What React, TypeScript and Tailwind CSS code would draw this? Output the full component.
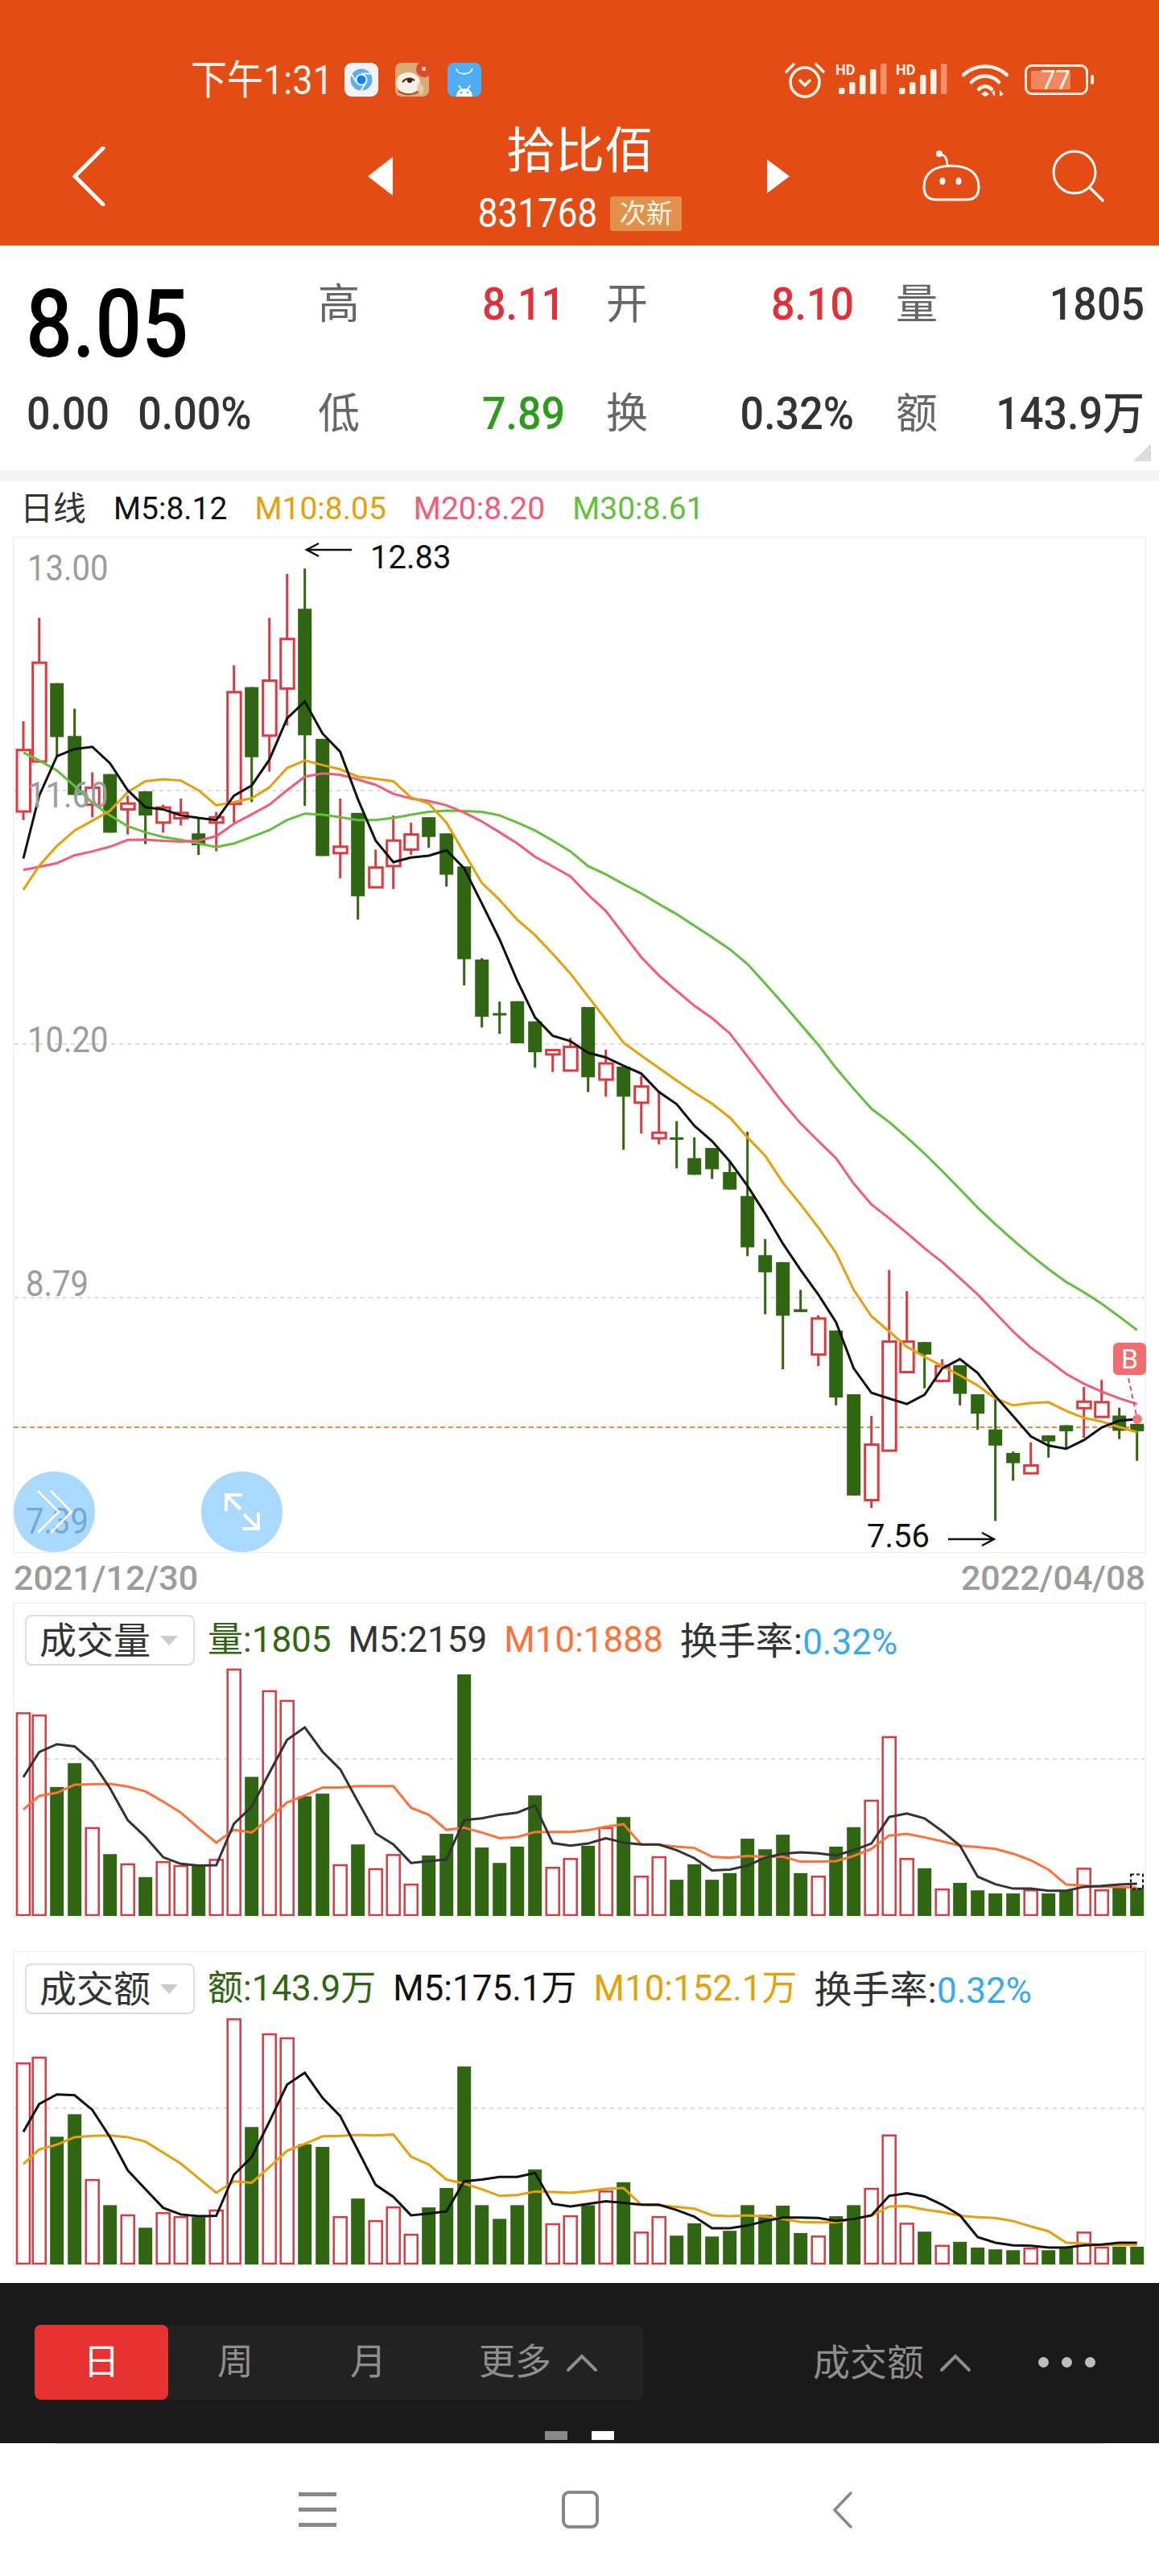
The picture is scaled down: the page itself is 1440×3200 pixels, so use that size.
import React from 'react';

const RED = '#e0383e';
const GREEN = '#306512';
const FONT = "font-['Roboto','Noto_Sans_CJK_SC',sans-serif]";

// x centre of each of the 64 trading days, in page pixels (the first one is clipped to the frame)
const xAt = (i: number) => (i === 0 ? 29 : 26.7 + 22 * i);

// Measured positions: left half and right half of the chart were read at different scales
const left = (v: number) => v / 2.24 - 67;
const right = (v: number) => v / 1.742 + 433;

// high, body top, body bottom, low, rising
type Candle = [number, number, number, number, number];

const candlesLeft: Candle[] = [
  [663, 743, 914, 938, 1], [375, 500, 775, 775, 1], [557, 557, 707, 760, 0], [628, 704, 868, 868, 0],
  [805, 848, 895, 930, 1], [810, 810, 973, 973, 0], [870, 892, 908, 978, 1], [858, 858, 925, 1005, 0],
  [895, 903, 945, 973, 1], [878, 918, 933, 953, 1], [932, 975, 1008, 1035, 0], [915, 930, 945, 1025, 1],
  [507, 582, 893, 945, 1], [568, 568, 763, 888, 0], [375, 550, 703, 803, 1], [253, 434, 572, 675, 1],
  [238, 350, 702, 898, 0], [712, 712, 1038, 1038, 0], [878, 1012, 1030, 1100, 1], [918, 918, 1150, 1215, 0],
  [1020, 1070, 1125, 1126, 1], [925, 995, 1066, 1130, 1], [945, 978, 1020, 1035, 1], [930, 930, 985, 1015, 0],
  [975, 975, 1090, 1123, 0], [1067, 1067, 1325, 1398, 0], [1322, 1326, 1485, 1515, 0], [1443, 1475, 1480, 1533, 0],
  [1442, 1442, 1559, 1559, 0], [1498, 1498, 1584, 1627, 0], [1578, 1578, 1590, 1639, 1], [1544, 1569, 1635, 1635, 1],
];

const candlesRight: Candle[] = [
  [263, 263, 415, 447, 0], [355, 385, 420, 457, 1], [392, 392, 457, 572, 0], [412, 435, 470, 537, 1],
  [445, 535, 547, 560, 1], [510, 545, 550, 612, 0], [545, 590, 626, 626, 0], [568, 568, 614, 635, 0],
  [597, 620, 658, 658, 0], [533, 672, 783, 802, 0], [765, 800, 837, 928, 0], [815, 815, 931, 1047, 0],
  [875, 917, 923, 923, 0], [930, 937, 1015, 1040, 1], [963, 963, 1108, 1125, 0], [1101, 1101, 1320, 1320, 0],
  [1148, 1210, 1330, 1347, 1], [832, 987, 1223, 1223, 1], [878, 987, 1053, 1055, 1], [988, 988, 1015, 1088, 0],
  [1025, 1040, 1072, 1075, 1], [1038, 1038, 1100, 1125, 0], [1101, 1101, 1143, 1178, 0], [1110, 1177, 1212, 1375, 0],
  [1225, 1228, 1250, 1288, 0], [1205, 1255, 1272, 1272, 1], [1190, 1190, 1203, 1238, 0], [1168, 1168, 1181, 1218, 0],
  [1085, 1117, 1131, 1195, 1], [1070, 1118, 1150, 1150, 1], [1130, 1147, 1180, 1198, 0], [1165, 1165, 1181, 1245, 0],
];

const candles: Candle[] = [
  ...candlesLeft.map((c) => [left(c[0]), left(c[1]), left(c[2]), left(c[3]), c[4]] as Candle),
  ...candlesRight.map((c) => [right(c[0]), right(c[1]), right(c[2]), right(c[3]), c[4]] as Candle),
];

const ma5 = [
  ...[1045, 870, 760, 740, 734, 780, 855, 902, 908, 925, 932, 938, 870, 842, 770, 655, 608, 697, 748, 880, 995, 1055, 1042, 1037, 1022, 1072, 1170, 1270, 1385, 1487, 1538, 1553].map(left),
  ...[362, 372, 390, 407, 447, 473, 520, 553, 597, 650, 710, 775, 832, 885, 945, 1045, 1098, 1110, 1122, 1102, 1045, 1025, 1055, 1105, 1148, 1192, 1212, 1219, 1200, 1173, 1158, 1155].map(right),
];
const ma10 = [
  ...[1132, 1065, 1010, 967, 940, 912, 860, 830, 824, 828, 855, 897, 888, 877, 847, 793, 772, 785, 797, 817, 823, 830, 875, 892, 945, 1030, 1113, 1160, 1215, 1258, 1310, 1365].map(left),
  ...[240, 290, 340, 368, 395, 422, 448, 472, 502, 545, 585, 643, 690, 740, 795, 875, 932, 965, 998, 1020, 1040, 1060, 1082, 1110, 1125, 1120, 1118, 1137, 1152, 1160, 1172, 1183].map(right),
];
const ma20 = [
  ...[1077, 1068, 1058, 1036, 1025, 1012, 993, 992, 996, 998, 995, 983, 948, 922, 895, 855, 817, 808, 812, 825, 840, 865, 878, 885, 897, 917, 942, 972, 1003, 1040, 1067, 1095].map(left),
  ...[20, 55, 105, 155, 195, 228, 260, 287, 320, 370, 420, 470, 515, 553, 590, 645, 690, 720, 752, 785, 815, 850, 885, 925, 965, 1000, 1028, 1057, 1078, 1095, 1110, 1122].map(right),
];
const ma30 = [
  ...[750, 772, 800, 843, 890, 925, 955, 972, 985, 993, 1003, 1013, 1003, 985, 966, 938, 920, 923, 930, 938, 938, 932, 923, 915, 912, 913, 915, 925, 945, 967, 995, 1025].map(left),
  ...[-42, -24, -3, 17, 40, 62, 87, 112, 138, 170, 212, 255, 300, 345, 395, 440, 483, 512, 545, 580, 618, 657, 697, 733, 767, 800, 830, 858, 880, 905, 933, 962].map(right),
];

const volTops = [
  325, 330, 492, 438, 585, 644, 667, 696, 662, 671, 670, 657, 226, 469, 275, 297, 513, 507, 669, 622, 678, 646, 713, 647, 598, 237, 629, 664, 627, 511, 675, 655,
  625, 585, 560, 695, 651, 702, 667, 702, 687, 609, 633, 600, 687, 695, 627, 583, 523, 379, 655, 676, 724, 709, 726, 733, 733, 726, 733, 726, 677, 726, 720, 720,
];
const volMa5 = [
  470, 413, 395, 400, 435, 495, 567, 605, 651, 666, 670, 669, 575, 537, 460, 385, 357, 412, 452, 525, 597, 622, 664, 660, 656, 567, 563, 555, 550, 534, 619, 625,
  620, 608, 618, 622, 622, 635, 653, 681, 679, 670, 652, 643, 640, 642, 647, 635, 620, 560, 552, 563, 592, 625, 695, 712, 722, 722, 727, 727, 718, 716, 713, 711,
];
const volMa10 = [
  543, 512, 505, 487, 486, 485, 491, 502, 525, 550, 585, 618, 589, 595, 563, 527, 511, 493, 493, 490, 490, 490, 539, 555, 589, 584, 595, 608, 605, 594, 594, 594,
  590, 582, 576, 622, 623, 627, 630, 650, 652, 648, 650, 650, 661, 661, 660, 648, 632, 602, 598, 606, 615, 625, 628, 632, 643, 658, 679, 713, 715, 718, 718, 720,
];
const amtTops = [
  1118, 1105, 1284, 1233, 1382, 1439, 1462, 1490, 1457, 1466, 1466, 1451, 1018, 1262, 1052, 1061, 1301, 1307, 1466, 1424, 1475, 1444, 1506, 1444, 1400, 1125, 1439, 1470, 1439, 1358, 1482, 1464,
  1439, 1408, 1387, 1501, 1466, 1508, 1480, 1510, 1497, 1439, 1461, 1440, 1502, 1510, 1464, 1439, 1402, 1281, 1481, 1499, 1531, 1522, 1535, 1539, 1541, 1537, 1541, 1535, 1501, 1535, 1533, 1533,
];
const amtMa5 = [
  1273, 1210, 1188, 1190, 1223, 1285, 1360, 1403, 1445, 1460, 1464, 1463, 1370, 1330, 1250, 1166, 1139, 1196, 1237, 1315, 1393, 1420, 1462, 1458, 1453, 1385, 1381, 1375, 1375, 1366, 1436, 1442,
  1436, 1430, 1434, 1438, 1438, 1450, 1465, 1491, 1491, 1485, 1475, 1467, 1467, 1468, 1475, 1470, 1462, 1418, 1412, 1419, 1438, 1462, 1511, 1524, 1530, 1531, 1535, 1535, 1530, 1528, 1524, 1524,
];
const amtMa10 = [
  1346, 1313, 1302, 1285, 1282, 1281, 1285, 1295, 1320, 1345, 1378, 1411, 1385, 1388, 1353, 1316, 1300, 1283, 1282, 1280, 1281, 1279, 1329, 1347, 1381, 1390, 1403, 1418, 1416, 1408, 1409, 1411,
  1407, 1402, 1400, 1438, 1439, 1443, 1447, 1462, 1464, 1462, 1465, 1470, 1477, 1478, 1478, 1470, 1463, 1442, 1441, 1449, 1455, 1463, 1466, 1468, 1475, 1487, 1498, 1524, 1526, 1529, 1529, 1529,
];

const polyline = (ys: number[]) => ys.map((y, i) => `${xAt(i)},${y.toFixed(1)}`).join(' ');

const PriceChart: React.FC = () => (
  <svg viewBox="17 1 1406 1260" className="block h-full w-full">
    {[315, 630, 945].map((y) => (
      <line key={y} x1="18" x2="1422" y1={y} y2={y} stroke="#ddd" strokeWidth="2" strokeDasharray="5 5" />
    ))}
    <line x1="17" x2="1422" y1="1106" y2="1106" stroke="#f08a3c" strokeWidth="2" strokeDasharray="6 4" />
    {candles.map((c, i) => {
      const x = xAt(i);
      const color = c[4] ? RED : GREEN;
      return (
        <g key={i}>
          <line x1={x} x2={x} y1={c[0]} y2={c[4] ? c[1] : c[3]} stroke={color} strokeWidth="3" />
          {c[4] ? <line x1={x} x2={x} y1={c[2]} y2={c[3]} stroke={color} strokeWidth="3" /> : null}
          {c[4] ? (
            <rect x={x - 8} y={c[1]} width="16.5" height={Math.max(c[2] - c[1], 3)} fill="#fff" stroke={color} strokeWidth="3" />
          ) : (
            <rect x={x - 8.5} y={c[1]} width="17" height={Math.max(c[2] - c[1], 3)} fill={color} />
          )}
        </g>
      );
    })}
    <polyline points={polyline(ma30)} fill="none" stroke="#62c03c" strokeWidth="3" />
    <polyline points={polyline(ma20)} fill="none" stroke="#f25c78" strokeWidth="3" />
    <polyline points={polyline(ma10)} fill="none" stroke="#e89f0c" strokeWidth="3" />
    <polyline points={polyline(ma5)} fill="none" stroke="#111" strokeWidth="3" />
    {/* high and low arrows */}
    <path d="M437 16H381M396 8L381 16L396 24" fill="none" stroke="#111" strokeWidth="2.500" />
    <path d="M1178 1245H1235M1220 1237L1235 1245L1220 1253" fill="none" stroke="#111" strokeWidth="2.500" />
    {/* buy marker stem */}
    <line x1="1402" x2="1413" y1="1045" y2="1096" stroke="#e8506a" strokeWidth="2" strokeDasharray="6 4" />
    <circle cx="1413" cy="1096" r="6" fill="#f27a80" />
  </svg>
);

interface Legend {
  text: string;
  value?: string;
  color: string;
  valueColor?: string;
  wide?: boolean;
}

interface VolumePanelProps {
  title: string;
  legends: Legend[];
  tops: number[];
  lineA: number[];
  lineB: number[];
  lineAColor: string;
  lineBColor: string;
  offset: number;
  gridY: number;
  showCursor?: boolean;
}

const VolumePanel: React.FC<VolumePanelProps> = ({ title, legends, tops, lineA, lineB, lineAColor, lineBColor, offset, gridY, showCursor }) => {
  const y = (v: number) => v / 1.823 - offset;
  return (
    <div className="relative mx-[16px] h-[390px] border border-[#ececec]">
      <svg viewBox="17 1 1406 388" className="absolute inset-0 h-full w-full">
        <line x1="18" x2="1422" y1={gridY} y2={gridY} stroke="#ddd" strokeWidth="2" strokeDasharray="5 5" />
        {tops.map((t, i) => {
          const x = xAt(i);
          const red = candles[i][4] === 1;
          return red ? (
            <rect key={i} x={x - 8} y={y(t)} width="16" height={388 - y(t)} fill="#fff" stroke={RED} strokeWidth="2.500" />
          ) : (
            <rect key={i} x={x - 8.5} y={y(t)} width="17" height={389 - y(t)} fill={GREEN} />
          );
        })}
        <polyline points={polyline(lineB.map(y))} fill="none" stroke={lineBColor} strokeWidth="3" />
        <polyline points={polyline(lineA.map(y))} fill="none" stroke={lineAColor} strokeWidth="3" />
        {showCursor ? <rect x="1405" y={y(690)} width="15" height="18" fill="none" stroke="#111" strokeWidth="2" strokeDasharray="4 3" /> : null}
      </svg>
      <div className="relative flex items-center pl-[14px] pt-[14px]">
        <div className="flex h-[63px] w-[211px] items-center rounded-[8px] border-2 border-[#dedede] bg-white pl-[16px]">
          <span className="text-[46px] leading-none text-[#333]">{title}</span>
          <span className="ml-[12px] h-0 w-0 border-x-[11px] border-t-[12px] border-x-transparent border-t-[#ccc]" />
        </div>
        <div className="ml-[16px] mt-[2px] flex gap-[21px] text-[44px] leading-none">
          {legends.map((l) => (
            <span key={l.text} style={{ color: l.color }} className={`whitespace-nowrap ${l.wide ? 'text-[47px]' : ''}`}>
              {l.text}
              {l.value ? (
                <span style={{ color: l.valueColor }} className="text-[44px]">
                  {l.value}
                </span>
              ) : null}
            </span>
          ))}
        </div>
      </div>
    </div>
  );
};

const StatusIcons: React.FC = () => (
  <div className="flex items-center">
    <svg width="42" height="42" viewBox="0 0 42 42" className="ml-[14px]">
      <rect width="42" height="42" rx="9" fill="#f3f3f5" />
      <circle cx="21" cy="21" r="13.500" fill="#5aaef5" />
      <path d="M21 13.500H33.500M27 24L20.500 34.500M15 24.500L8.500 14" stroke="#f3f3f5" strokeWidth="2" />
      <circle cx="21" cy="21" r="7.500" fill="#f3f3f5" />
      <circle cx="21" cy="21" r="5.500" fill="#0a84f0" />
    </svg>
    <svg width="42" height="42" viewBox="0 0 42 42" className="ml-[21px]">
      <rect width="42" height="42" rx="8" fill="#d9ab76" />
      <circle cx="36" cy="8" r="10" fill="#e0472c" />
      <rect x="33" y="5" width="5" height="5" fill="#f4c48c" />
      <ellipse cx="16" cy="25" rx="15" ry="13" fill="#f7f0e4" />
      <path d="M28 25C37 26 37 37 32 40C27 38 27 30 28 25Z" fill="#e8c99c" />
      <path d="M9 24C14 18 20 19 24 22" stroke="#5a3418" strokeWidth="2.500" fill="none" />
      <circle cx="18" cy="22" r="3" fill="#3a2010" />
      <path d="M4 35C12 41 22 40 29 36" stroke="#b8401c" strokeWidth="2" fill="none" />
    </svg>
    <svg width="42" height="42" viewBox="0 0 42 42" className="ml-[23px]">
      <rect width="42" height="42" rx="8" fill="#4fadf5" />
      <path d="M11 7C12 16 29 16 31 7" stroke="#fff" strokeWidth="1.800" fill="none" />
      <path d="M11 42C11 36 15 32 21 32C27 32 31 36 31 42Z" fill="#fff" />
      <path d="M14 28L17 33M28 28L25 33" stroke="#fff" strokeWidth="1.800" />
      <circle cx="17" cy="37" r="1.300" fill="#4fadf5" />
      <circle cx="25" cy="37" r="1.300" fill="#4fadf5" />
    </svg>
  </div>
);

const Signal: React.FC<{ className?: string }> = ({ className }) => (
  <div className={`relative h-[40px] w-[60px] ${className ?? ''}`}>
    <svg width="60" height="40" viewBox="0 0 60 40" className="absolute inset-0">
      {[
        [0, 30, 8],
        [13, 23, 15],
        [26, 14, 24],
        [39, 7, 31],
      ].map(([x, y, h]) => (
        <rect key={x} x={x} y={y} width="7.500" height={h} rx="2" fill="#fff0e8" />
      ))}
      <rect x="52" y="0" width="7.500" height="38" rx="2" fill="#f2906c" />
    </svg>
    <span className="absolute left-[-4px] top-[-1px] text-[18px] font-bold leading-none text-[#fff0e8]">HD</span>
  </div>
);

const RightStatus: React.FC = () => (
  <div className="flex items-center">
    <svg width="50" height="46" viewBox="0 0 50 46">
      <circle cx="25" cy="26" r="18" fill="none" stroke="#fff0e8" strokeWidth="3.600" />
      <path d="M2 13L11 4M48 13L39 4" stroke="#fff0e8" strokeWidth="3.600" strokeLinecap="round" />
      <path d="M19 24L25 30L31 24" fill="none" stroke="#fff0e8" strokeWidth="3.600" strokeLinecap="round" strokeLinejoin="round" />
    </svg>
    <Signal className="ml-[17px]" />
    <Signal className="ml-[15px]" />
    <svg width="58" height="42" viewBox="0 0 58 42" className="ml-[18px]">
      <path d="M2 15C17 1 41 1 56 15" fill="none" stroke="#fff0e8" strokeWidth="4.500" strokeLinecap="round" />
      <path d="M12 24C21 14 37 14 46 24" fill="none" stroke="#fff0e8" strokeWidth="4.500" strokeLinecap="round" />
      <path d="M21 33C25 28 33 28 37 33" fill="none" stroke="#fff0e8" strokeWidth="4.500" strokeLinecap="round" />
      <path d="M24 39L29 35L34 39L29 42Z" fill="#fff0e8" />
      <path d="M41 34V42L37 37ZM47 42V34L52 39Z" fill="#fff0e8" />
    </svg>
    <div className="relative ml-[20px] flex h-[38px] w-[79px] items-center rounded-[9px] border-[3px] border-[#fff0e8] pl-[5px]">
      <div className="h-[23px] w-[49px] rounded-[2px] bg-[#f0875f]" />
      <span className="absolute left-[17px] top-[-2px] text-[33px] leading-[38px] text-[#fff5ee]">77</span>
    </div>
    <div className="ml-[3px] h-[12px] w-[4px] rounded-full bg-[#fff0e8]" />
  </div>
);

const PageHeader: React.FC = () => (
  <header className="h-[305px] bg-[#e34c14] pt-[76px] text-white">
    <div className="flex h-[46px] items-center justify-between pl-[237px] pr-[81px]">
      <div className="flex items-center">
        <span className="scale-y-[1.1] text-[45px] leading-none text-[#fff3ec]">下午1:31</span>
        <StatusIcons />
      </div>
      <RightStatus />
    </div>
    <div className="mt-[28px] flex items-center pl-[90px]">
      <svg width="41" height="74" viewBox="0 0 41 74">
        <path d="M38 2L3 37L38 72" fill="none" stroke="#fff" strokeWidth="5" strokeLinecap="round" />
      </svg>
      <div className="ml-[326px] h-0 w-0 border-y-[24px] border-r-[31px] border-y-transparent border-r-white" />
      <div className="flex w-[465px] flex-col items-center">
        <div className="h-[70px] text-[61px] leading-[76px]">拾比佰</div>
        <div className="mt-[23px] flex h-[44px] items-center">
          <span className="scale-y-[1.12] text-[44px] leading-none">831768</span>
          <span className="ml-[16px] flex h-[43px] w-[89px] items-center justify-center rounded-[3px] bg-[#e0914b] text-[33px] leading-none text-[#fff6e6]">次新</span>
        </div>
      </div>
      <div className="h-0 w-0 border-y-[21px] border-l-[28px] border-y-transparent border-l-white" />
      <svg width="72" height="66" viewBox="0 0 72 66" className="ml-[165px]">
        <path d="M22 6C28 6 31 10 31 20" fill="none" stroke="#fff" strokeWidth="2.500" />
        <circle cx="21" cy="5" r="4" fill="#fff" />
        <path d="M2 46C2 28 16 20 36 20C56 20 70 28 70 46C70 58 64 62 55 62H17C8 62 2 58 2 46Z" fill="none" stroke="#fff" strokeWidth="3" />
        <ellipse cx="25" cy="39" rx="3.500" ry="4.500" fill="#fff" />
        <ellipse cx="45" cy="39" rx="3.500" ry="4.500" fill="#fff" />
      </svg>
      <svg width="66" height="66" viewBox="0 0 66 66" className="ml-[89px]">
        <circle cx="28" cy="28" r="26" fill="none" stroke="#fff" strokeWidth="3" />
        <path d="M47 47L63 63" stroke="#fff" strokeWidth="3.500" strokeLinecap="round" />
      </svg>
    </div>
  </header>
);

const Stat: React.FC<{ label: string; value: string; color?: string }> = ({ label, value, color }) => (
  <>
    <div className="text-right text-[52px] leading-none text-[#666]">{label}</div>
    <div className={`origin-right scale-y-[1.07] text-right text-[52px] font-medium leading-none ${color ?? 'text-[#333]'}`}>{value}</div>
  </>
);

const QuoteSummary: React.FC = () => (
  <section className="relative h-[279px] bg-white pt-[6px]">
    <div className="grid grid-cols-[395px_52px_255px_103px_256px_104px_257px] grid-rows-[136px_136px] items-center">
      <div className="origin-left scale-y-[1.15] pl-[32px] pt-[42px] text-[102px] font-medium leading-none text-black">8.05</div>
      <Stat label="高" value="8.11" color="text-[#e0303a]" />
      <Stat label="开" value="8.10" color="text-[#e0303a]" />
      <Stat label="量" value="1805" />
      <div className="flex scale-y-[1.07] gap-[35px] pl-[33px] text-[52px] font-medium leading-none text-[#333]">
        <span>0.00</span>
        <span>0.00%</span>
      </div>
      <Stat label="低" value="7.89" color="text-[#2e9a1e]" />
      <Stat label="换" value="0.32%" />
      <Stat label="额" value="143.9万" />
    </div>
    <div className="absolute bottom-[11px] right-[10px] h-0 w-0 border-b-[22px] border-l-[22px] border-b-[#dcdcdc] border-l-transparent" />
  </section>
);

const PriceTag: React.FC<{ className: string; children: React.ReactNode }> = ({ className, children }) => (
  <span className={`absolute scale-y-[1.1] text-[40px] leading-none text-[#9c9c9c] ${className}`}>{children}</span>
);

const FloatButton: React.FC<{ className: string; children: React.ReactNode }> = ({ className, children }) => (
  <div className={`absolute bottom-0 flex h-[100px] w-[101px] items-center justify-center rounded-full bg-[#56b4ff]/50 ${className}`}>{children}</div>
);

const KlineSection: React.FC = () => (
  <section className="bg-white">
    <div className="flex h-[69px] items-center gap-[34px] pl-[25px] text-[39px] leading-none">
      <span className="text-[41px] text-[#333]">日线</span>
      <span className="text-[#111]">M5:8.12</span>
      <span className="text-[#e89f0c]">M10:8.05</span>
      <span className="text-[#f25c78]">M20:8.20</span>
      <span className="text-[#62c03c]">M30:8.61</span>
    </div>
    <div className="relative mx-[16px] h-[1262px] border border-[#ececec]">
      <PriceChart />
      <PriceTag className="left-[17px] top-[19px]">13.00</PriceTag>
      <PriceTag className="left-[17px] top-[301px]">11.60</PriceTag>
      <PriceTag className="left-[17px] top-[605px]">10.20</PriceTag>
      <PriceTag className="left-[15px] top-[908px]">8.79</PriceTag>
      <PriceTag className="left-[15px] top-[1203px]">7.39</PriceTag>
      <span className="absolute left-[443px] top-[5px] text-[40px] leading-none text-[#111]">12.83</span>
      <span className="absolute left-[1060px] top-[1221px] text-[40px] leading-none text-[#111]">7.56</span>
      <div className="absolute left-[1366px] top-[1000px] flex h-[40px] w-[41px] items-center justify-center rounded-[6px] bg-[#f06e72] text-[34px] leading-none text-white">B</div>
      <FloatButton className="left-0">
        <svg width="46" height="56" viewBox="0 0 46 56">
          <path d="M2 2L28 28L2 54M18 2L44 28L18 54" fill="none" stroke="#fff" strokeWidth="2.500" />
        </svg>
      </FloatButton>
      <FloatButton className="left-[233px]">
        <svg width="52" height="50" viewBox="0 0 52 50">
          <path d="M6 24V4H26M6 4L24 22M46 26V46H26M46 46L28 28" fill="none" stroke="#fff" strokeWidth="4" />
        </svg>
      </FloatButton>
    </div>
    <div className="flex h-[62px] items-center justify-between px-[17px] text-[43px] font-medium leading-none text-[#9c9c9c]">
      <span>2021/12/30</span>
      <span>2022/04/08</span>
    </div>
  </section>
);

const Caret: React.FC = () => (
  <svg width="40" height="24" viewBox="0 0 40 24">
    <path d="M3 21L20 4L37 21" fill="none" stroke="currentColor" strokeWidth="4" strokeLinecap="round" />
  </svg>
);

const PeriodBar: React.FC = () => (
  <div className="relative flex h-[199px] bg-[#1a1a1a] pl-[43px] pt-[52px] text-[45px] leading-none text-[#8e8e8e]">
    <div className="flex h-[93px] w-[756px] items-center rounded-[8px] bg-[#222]">
      <div className="flex h-[93px] w-[166px] items-center justify-center rounded-[8px] bg-[#e83232] text-white">日</div>
      <span className="ml-[61px]">周</span>
      <span className="ml-[120px]">月</span>
      <span className="ml-[115px] whitespace-nowrap">更多</span>
      <span className="ml-[18px]">
        <Caret />
      </span>
    </div>
    <div className="ml-[211px] flex h-[93px] items-center text-[46px]">
      <span className="whitespace-nowrap">成交额</span>
      <span className="ml-[19px]">
        <Caret />
      </span>
      <div className="ml-[83px] flex gap-[16px]">
        <span className="h-[13px] w-[13px] rounded-full bg-[#bdbdbd]" />
        <span className="h-[13px] w-[13px] rounded-full bg-[#bdbdbd]" />
        <span className="h-[13px] w-[13px] rounded-full bg-[#bdbdbd]" />
      </div>
    </div>
    <div className="absolute bottom-[4px] left-[677px] flex gap-[30px]">
      <span className="h-[11px] w-[28px] bg-[#8a8a8a]" />
      <span className="h-[11px] w-[28px] bg-white" />
    </div>
  </div>
);

const SystemNav: React.FC = () => (
  <nav className="h-[165px] bg-white">
    <div className="mx-[69px] h-[1px] bg-[#ddd]" />
    <div className="flex items-center pl-[371px] pt-[58px]">
      <div className="flex h-[43px] w-[47px] flex-col justify-between">
        <span className="h-[5px] bg-[#888]" />
        <span className="h-[5px] bg-[#888]" />
        <span className="h-[5px] bg-[#888]" />
      </div>
      <div className="ml-[280px] h-[47px] w-[46px] rounded-[9px] border-[4px] border-[#888]" />
      <svg width="24" height="46" viewBox="0 0 24 46" className="ml-[291px]">
        <path d="M22 2L2 23L22 44" fill="none" stroke="#888" strokeWidth="3.500" strokeLinecap="round" />
      </svg>
    </div>
  </nav>
);

const App: React.FC = () => {
  return (
    <div className={`w-[1440px] bg-white ${FONT}`}>
      <PageHeader />
      <QuoteSummary />
      <div className="h-[14px] bg-[#f3f3f3]" />
      <KlineSection />
      <VolumePanel
        title="成交量"
        tops={volTops}
        lineA={volMa5}
        lineB={volMa10}
        lineAColor="#333"
        lineBColor="#ff7138"
        offset={41}
        gridY={194}
        showCursor
        legends={[
          { text: '量:', value: '1805', color: GREEN, valueColor: GREEN },
          { text: 'M5:2159', color: '#333' },
          { text: 'M10:1888', color: '#ff7138' },
          { text: '换手率:', value: '0.32%', color: '#333', valueColor: '#38a8f0', wide: true },
        ]}
      />
      <div className="h-[43px] bg-white" />
      <VolumePanel
        title="成交额"
        tops={amtTops}
        lineA={amtMa5}
        lineB={amtMa10}
        lineAColor="#111"
        lineBColor="#e89f0c"
        offset={474}
        gridY={195}
        legends={[
          { text: '额:', value: '143.9万', color: GREEN, valueColor: GREEN },
          { text: 'M5:175.1万', color: '#111' },
          { text: 'M10:152.1万', color: '#e89f0c' },
          { text: '换手率:', value: '0.32%', color: '#333', valueColor: '#38a8f0', wide: true },
        ]}
      />
      <div className="h-[22px] bg-white" />
      <PeriodBar />
      <SystemNav />
    </div>
  );
};

export default App;
